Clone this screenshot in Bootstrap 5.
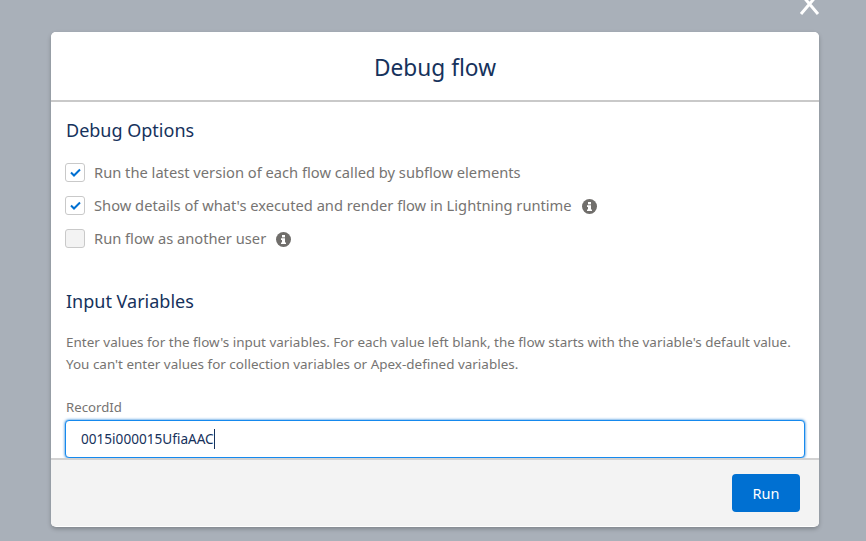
<!DOCTYPE html>
<html lang="en">
<head>
<meta charset="utf-8">
<title>Debug flow</title>
<link href="https://cdn.jsdelivr.net/npm/bootstrap@5.3.0/dist/css/bootstrap.min.css" rel="stylesheet">
<style>
html,body{height:100%;overflow:hidden}
body{background:#a9b0b9;font-family:"Noto Sans","Open Sans",sans-serif;font-size:13.5px;color:#767472;position:relative;padding:32px 47px 0 51px}
.dbg-close{position:absolute;left:799px;top:-10px;width:22px;height:26px;padding:0;border:0;background:none}
.dbg-modal{width:768px;height:495px;border:0;border-radius:5px;box-shadow:0 2px 4px rgba(0,0,0,.25);overflow:hidden}
.dbg-head{height:70px;border-bottom:2px solid #c9c9c9;padding-top:4px}
.dbg-title{font-size:22.7px;font-weight:400;color:#16325c;margin:0;line-height:1.2}
.dbg-body{height:357px;padding:16px 14px 0 15px;overflow:hidden}
.dbg-sub{font-size:18px;font-weight:400;color:#16325c;margin:0;line-height:24px}
.dbg-opts{margin-top:19px;gap:11px}
.dbg-opt{height:22px;font-size:14.7px}
.dbg-box{width:20px;height:19px;border:1px solid #c9c9c9;border-radius:3px;background:#fff;margin:0 9px 0 -1px;flex:none}
.dbg-box.is-off{background:#f3f3f3}
.dbg-info{margin:2px 0 0 10px;flex:none}
.dbg-help{font-size:13.46px;line-height:22px;margin:18px 0 0}
.dbg-sec{margin-top:40px}
.dbg-label{font-size:13.2px;line-height:18px;margin:23px 0 4px;display:block}
.dbg-input{height:38px;margin-left:-1px;border:1px solid #1589ee;border-radius:4px;box-shadow:0 0 3px #0070d2;padding:0 15px;color:#16325c;font-size:13.6px}
.dbg-caret{width:1px;height:20px;background:#16325c}
.dbg-foot{height:68px;background:#f3f3f3;border-top:2px solid #d2d2d2;padding:0 19px 0 0;margin-top:-1px;position:relative}
.dbg-run{width:68px;height:38px;background:#0070d2;border:0;border-radius:4px;color:#fff;font-size:14.5px;padding:1px 0 0}
</style>
</head>
<body>
<button class="dbg-close" type="button" aria-label="Close">
<svg width="22" height="26" viewBox="0 0 22 26"><path d="M2 4L19 24M19 4L2 24" stroke="#fff" stroke-width="3" fill="none"/></svg>
</button>
<div class="card dbg-modal">
  <div class="dbg-head d-flex align-items-center justify-content-center bg-white">
    <h2 class="dbg-title">Debug flow</h2>
  </div>
  <div class="dbg-body bg-white">
    <h3 class="dbg-sub">Debug Options</h3>
    <div class="dbg-opts d-flex flex-column">
      <div class="dbg-opt d-flex align-items-center">
        <span class="dbg-box d-flex align-items-center justify-content-center"><svg width="11" height="9" viewBox="0 0 11 9"><path d="M1 4.5L4 7.5L10 1.5" stroke="#0070d2" stroke-width="2" fill="none"/></svg></span>
        <span>Run the latest version of each flow called by subflow elements</span>
      </div>
      <div class="dbg-opt d-flex align-items-center">
        <span class="dbg-box d-flex align-items-center justify-content-center"><svg width="11" height="9" viewBox="0 0 11 9"><path d="M1 4.5L4 7.5L10 1.5" stroke="#0070d2" stroke-width="2" fill="none"/></svg></span>
        <span>Show details of what's executed and render flow in Lightning runtime</span>
        <svg class="dbg-info" width="15" height="15" viewBox="0 0 15 15"><circle cx="7.5" cy="7.5" r="7.5" fill="#706e6b"/><rect x="6" y="3" width="3" height="2.4" fill="#fff"/><path d="M5 6.3H9V10.4H10V12H5V10.4H6V7.9H5Z" fill="#fff"/></svg>
      </div>
      <div class="dbg-opt d-flex align-items-center">
        <span class="dbg-box is-off"></span>
        <span>Run flow as another user</span>
        <svg class="dbg-info" width="15" height="15" viewBox="0 0 15 15"><circle cx="7.5" cy="7.5" r="7.5" fill="#706e6b"/><rect x="6" y="3" width="3" height="2.4" fill="#fff"/><path d="M5 6.3H9V10.4H10V12H5V10.4H6V7.9H5Z" fill="#fff"/></svg>
      </div>
    </div>
    <h3 class="dbg-sub dbg-sec">Input Variables</h3>
    <p class="dbg-help">Enter values for the flow's input variables. For each value left blank, the flow starts with the variable's default value.<br>You can't enter values for collection variables or Apex-defined variables.</p>
    <label class="dbg-label">RecordId</label>
    <div class="dbg-input d-flex align-items-center bg-white"><span>0015i000015UfiaAAC</span><span class="dbg-caret"></span></div>
  </div>
  <div class="dbg-foot d-flex align-items-center justify-content-end">
    <button class="btn dbg-run" type="button">Run</button>
  </div>
</div>
<script src="https://cdn.jsdelivr.net/npm/bootstrap@5.3.0/dist/js/bootstrap.bundle.min.js"></script>
</body>
</html>
